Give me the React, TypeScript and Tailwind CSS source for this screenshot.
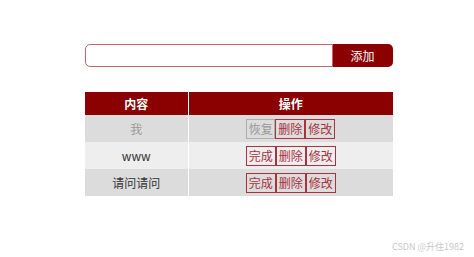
const rows = [
  { text: "我", done: true },
  { text: "www", done: false },
  { text: "请问请问", done: false },
];

function ActionButton({ label, muted }: { label: string; muted?: boolean }) {
  return (
    <button
      className={
        muted
          ? "h-[20px] w-[29px] border border-[#b0b0b0] bg-transparent text-[12px] leading-[18px] text-[#9a9a9a]"
          : "h-[20px] w-[30px] border border-[#a8323e] bg-transparent text-[12px] leading-[18px] text-[#a8323e]"
      }
    >
      {label}
    </button>
  );
}

export default function App() {
  return (
    <div
      className="relative h-[257px] w-[474px] bg-white pl-[3px] pt-[44px]"
      style={{ fontFamily: '"Microsoft YaHei", "Noto Sans CJK SC", sans-serif' }}
    >
      {/* Input row */}
      <div className="mx-auto flex h-[23px] w-[308px]">
        <input className="h-full flex-1 rounded-l-[5px] border border-[#c0656f] outline-none" />
        <button className="h-full w-[60px] rounded-r-[5px] bg-[#8b0000] text-[12px] text-white">添加</button>
      </div>

      {/* Table */}
      <table className="mx-auto mt-[25px] w-[308px] border-collapse text-[12px]">
        <thead>
          <tr className="h-[23px] bg-[#8b0000] text-[12px] font-bold text-white">
            <th className="w-[104px] border-r border-white">内容</th>
            <th>操作</th>
          </tr>
        </thead>
        <tbody>
          {rows.map((r, i) => (
            <tr key={i} className={i % 2 === 0 ? "h-[27px] bg-[#dcdcdc]" : "h-[27px] bg-[#eeeeee]"}>
              <td className={r.done ? "border-r border-white text-center text-[#999]" : "border-r border-white text-center text-[#333]"}>
                {r.text}
              </td>
              <td>
                <div className="flex justify-center">
                  <ActionButton label={r.done ? "恢复" : "完成"} muted={r.done} />
                  <ActionButton label="删除" />
                  <ActionButton label="修改" />
                </div>
              </td>
            </tr>
          ))}
        </tbody>
      </table>

      <div className="absolute bottom-[4px] right-[10px] text-[9px] text-[#c8c8c8]">CSDN @升住1982</div>
    </div>
  );
}
